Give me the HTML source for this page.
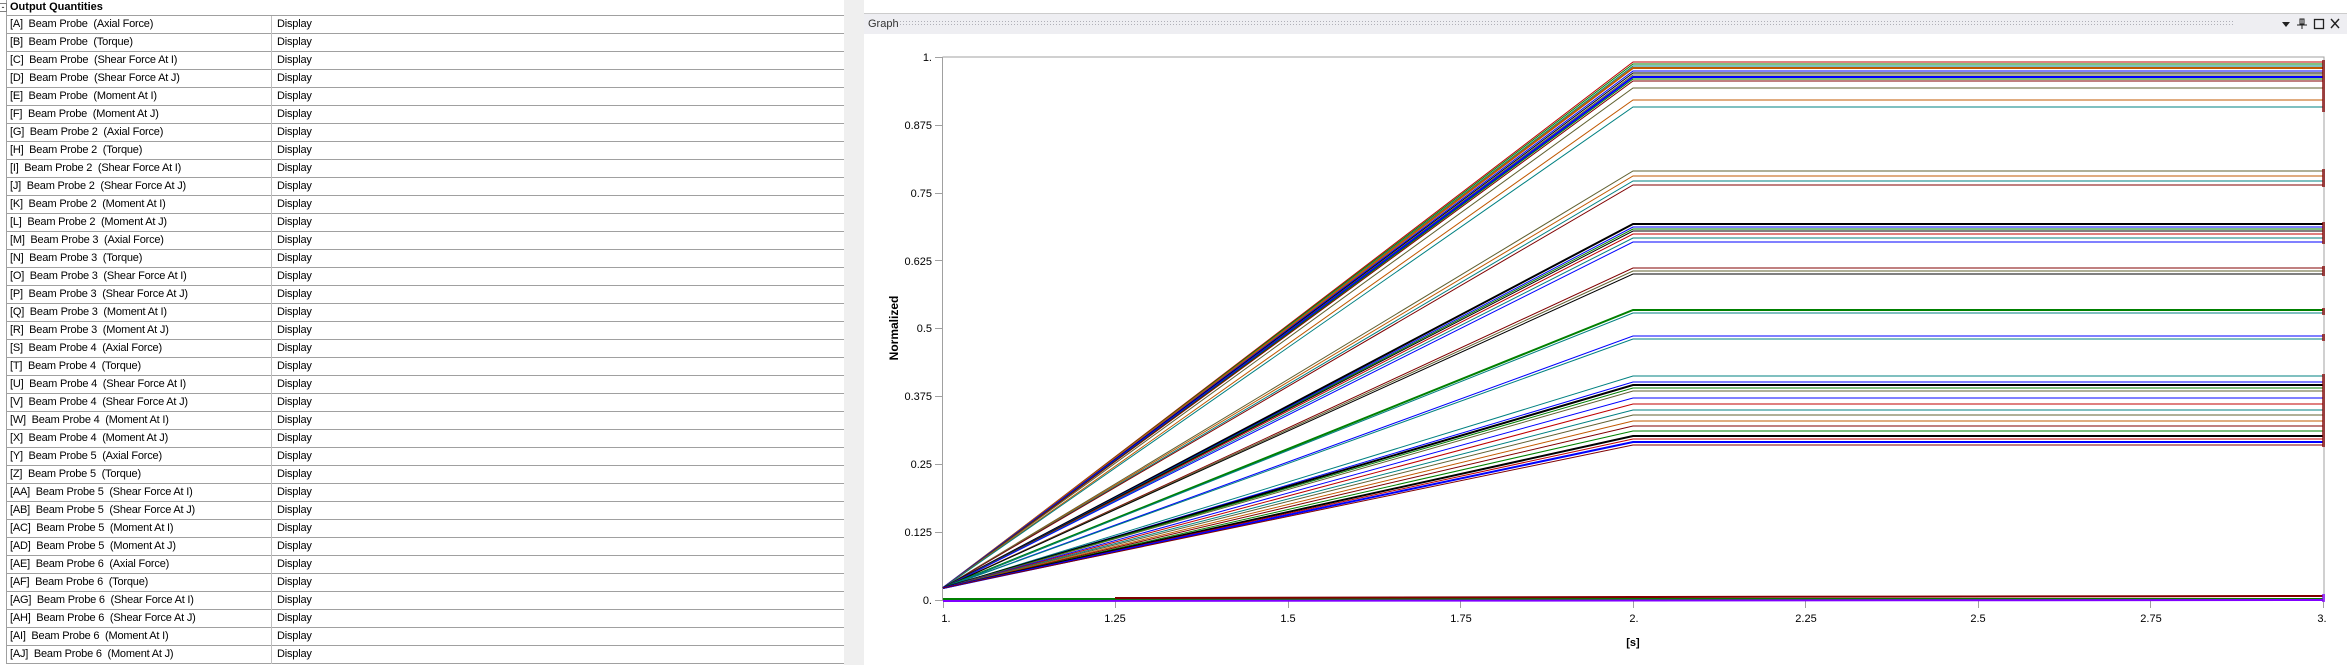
<!DOCTYPE html>
<html><head><meta charset="utf-8"><style>
body{margin:0;width:2347px;height:665px;background:#fff;position:relative;overflow:hidden;font-family:"Liberation Sans",sans-serif;font-size:11px;color:#000}
#tbl{position:absolute;left:6px;top:0;width:837px;border-left:1px solid #a0a0a0;border-right:1px solid #a0a0a0}
.r{height:17px;border-bottom:1px solid #a0a0a0;position:relative;line-height:17px;white-space:pre;letter-spacing:-0.2px}
.r span{position:absolute;left:3px}
.r b{position:absolute;left:264px;top:0;bottom:-1px;border-left:1px solid #c0c0c0;font-weight:normal;padding-left:5px}
.h{height:15px;border-bottom:1px solid #a0a0a0;font-weight:bold;line-height:15px;padding-left:3px}
#minus{position:absolute;left:0;top:3px;width:6px;height:7px;border:1px solid #808080;border-left:none;font-size:9px;line-height:6px;text-align:center;background:#fff}
#gut{position:absolute;left:844px;top:0;width:20px;height:665px;background:#efefef}
#gh{position:absolute;left:864px;top:13px;width:1483px;height:20px;background:#eeeef2;border-top:1px solid #ccc}
</style></head><body>
<div id="tbl">
<div class="h">Output Quantities</div>
<div class="r"><span>[A]  Beam Probe  (Axial Force)</span><b>Display</b></div>
<div class="r"><span>[B]  Beam Probe  (Torque)</span><b>Display</b></div>
<div class="r"><span>[C]  Beam Probe  (Shear Force At I)</span><b>Display</b></div>
<div class="r"><span>[D]  Beam Probe  (Shear Force At J)</span><b>Display</b></div>
<div class="r"><span>[E]  Beam Probe  (Moment At I)</span><b>Display</b></div>
<div class="r"><span>[F]  Beam Probe  (Moment At J)</span><b>Display</b></div>
<div class="r"><span>[G]  Beam Probe 2  (Axial Force)</span><b>Display</b></div>
<div class="r"><span>[H]  Beam Probe 2  (Torque)</span><b>Display</b></div>
<div class="r"><span>[I]  Beam Probe 2  (Shear Force At I)</span><b>Display</b></div>
<div class="r"><span>[J]  Beam Probe 2  (Shear Force At J)</span><b>Display</b></div>
<div class="r"><span>[K]  Beam Probe 2  (Moment At I)</span><b>Display</b></div>
<div class="r"><span>[L]  Beam Probe 2  (Moment At J)</span><b>Display</b></div>
<div class="r"><span>[M]  Beam Probe 3  (Axial Force)</span><b>Display</b></div>
<div class="r"><span>[N]  Beam Probe 3  (Torque)</span><b>Display</b></div>
<div class="r"><span>[O]  Beam Probe 3  (Shear Force At I)</span><b>Display</b></div>
<div class="r"><span>[P]  Beam Probe 3  (Shear Force At J)</span><b>Display</b></div>
<div class="r"><span>[Q]  Beam Probe 3  (Moment At I)</span><b>Display</b></div>
<div class="r"><span>[R]  Beam Probe 3  (Moment At J)</span><b>Display</b></div>
<div class="r"><span>[S]  Beam Probe 4  (Axial Force)</span><b>Display</b></div>
<div class="r"><span>[T]  Beam Probe 4  (Torque)</span><b>Display</b></div>
<div class="r"><span>[U]  Beam Probe 4  (Shear Force At I)</span><b>Display</b></div>
<div class="r"><span>[V]  Beam Probe 4  (Shear Force At J)</span><b>Display</b></div>
<div class="r"><span>[W]  Beam Probe 4  (Moment At I)</span><b>Display</b></div>
<div class="r"><span>[X]  Beam Probe 4  (Moment At J)</span><b>Display</b></div>
<div class="r"><span>[Y]  Beam Probe 5  (Axial Force)</span><b>Display</b></div>
<div class="r"><span>[Z]  Beam Probe 5  (Torque)</span><b>Display</b></div>
<div class="r"><span>[AA]  Beam Probe 5  (Shear Force At I)</span><b>Display</b></div>
<div class="r"><span>[AB]  Beam Probe 5  (Shear Force At J)</span><b>Display</b></div>
<div class="r"><span>[AC]  Beam Probe 5  (Moment At I)</span><b>Display</b></div>
<div class="r"><span>[AD]  Beam Probe 5  (Moment At J)</span><b>Display</b></div>
<div class="r"><span>[AE]  Beam Probe 6  (Axial Force)</span><b>Display</b></div>
<div class="r"><span>[AF]  Beam Probe 6  (Torque)</span><b>Display</b></div>
<div class="r"><span>[AG]  Beam Probe 6  (Shear Force At I)</span><b>Display</b></div>
<div class="r"><span>[AH]  Beam Probe 6  (Shear Force At J)</span><b>Display</b></div>
<div class="r"><span>[AI]  Beam Probe 6  (Moment At I)</span><b>Display</b></div>
<div class="r"><span>[AJ]  Beam Probe 6  (Moment At J)</span><b>Display</b></div>
</div>
<div id="minus">-</div>
<div id="gut"></div>
<div id="gh"></div>
<svg style="position:absolute;left:0;top:0" width="2347" height="665">
<defs><pattern id="dot" width="3" height="3" patternUnits="userSpaceOnUse"><rect width="1" height="1" fill="#b0b0b8"/></pattern></defs>
<text x="868" y="27" font-family="Liberation Sans" font-size="11" fill="#333">Graph</text>
<rect x="900" y="20" width="1335" height="6" fill="url(#dot)"/>
<path d="M2282 22h8l-4 5z" fill="#222"/>
<path d="M2302 19v6M2300 19h4v5h-4zM2297 25h10M2302 25v4" stroke="#222" fill="none"/>
<rect x="2314.5" y="19.5" width="9" height="9" fill="none" stroke="#222" stroke-width="1.3"/>
<path d="M2331 19l8 9M2339 19l-8 9" stroke="#222" stroke-width="1.4"/>
<g font-family="Liberation Sans" font-size="11" fill="#000" text-anchor="end">
<text x="932" y="61">1.</text><text x="932" y="129">0.875</text><text x="932" y="197">0.75</text><text x="932" y="265">0.625</text><text x="932" y="332">0.5</text><text x="932" y="400">0.375</text><text x="932" y="468">0.25</text><text x="932" y="536">0.125</text><text x="932" y="604">0.</text>
</g>
<g font-family="Liberation Sans" font-size="11" text-anchor="middle">
<text x="946" y="622">1.</text><text x="1115" y="622">1.25</text><text x="1288" y="622">1.5</text><text x="1461" y="622">1.75</text><text x="1634" y="622">2.</text><text x="1806" y="622">2.25</text><text x="1978" y="622">2.5</text><text x="2151" y="622">2.75</text><text x="2322" y="622">3.</text>
<text x="1633" y="646" font-weight="bold">[s]</text>
</g>
<text transform="translate(898,328) rotate(-90)" font-family="Liberation Sans" font-size="12" font-weight="bold" text-anchor="middle">Normalized</text>
<g stroke="#a0a0a0" fill="none">
<path d="M942.5 57v543.5h1381.5V57H942.5"/>
<path d="M935 57.5h7M935 125.5h7M935 193.5h7M935 260.5h7M935 328.5h7M935 396.5h7M935 464.5h7M935 532.5h7M935 600.5h7"/>
<path d="M943.5 601v7M1115.5 601v7M1288.5 601v7M1460.5 601v7M1633.5 601v7M1805.5 601v7M1978.5 601v7M2150.5 601v7M2323.5 601v7"/>
</g>
<g fill="none" stroke-width="1">
<path stroke="#c00000" d="M943 588L1633 62L2323 62"/>
<path stroke="#008000" d="M943 588L1633 64L2323 64"/>
<path stroke="#008080" d="M943 588L1633 66L2323 66"/>
<path stroke="#c05800" d="M943 588L1633 68L2323 68" stroke-width="2"/>
<path stroke="#0000ff" d="M943 588L1633 71L2323 71"/>
<path stroke="#000" d="M943 588L1633 73L2323 73"/>
<path stroke="#606030" d="M943 588L1633 75L2323 75"/>
<path stroke="#0000ff" d="M943 588L1633 77L2323 77" stroke-width="2"/>
<path stroke="#008000" d="M943 588L1633 79L2323 79"/>
<path stroke="#800000" d="M943 588L1633 81L2323 81"/>
<path stroke="#606030" d="M943 588L1633 88L2323 88"/>
<path stroke="#c05800" d="M943 588L1633 100L2323 100"/>
<path stroke="#008080" d="M943 588L1633 107L2323 107"/>
<path stroke="#606030" d="M943 588L1633 171L2323 171"/>
<path stroke="#c05800" d="M943 588L1633 176L2323 176"/>
<path stroke="#008080" d="M943 588L1633 181L2323 181"/>
<path stroke="#800000" d="M943 588L1633 185L2323 185"/>
<path stroke="#000" d="M943 588L1633 224L2323 224" stroke-width="2"/>
<path stroke="#0000ff" d="M943 588L1633 227L2323 227"/>
<path stroke="#008000" d="M943 588L1633 229L2323 229"/>
<path stroke="#000" d="M943 588L1633 231L2323 231"/>
<path stroke="#c00000" d="M943 588L1633 234L2323 234"/>
<path stroke="#008080" d="M943 588L1633 238L2323 238"/>
<path stroke="#0000ff" d="M943 588L1633 242L2323 242"/>
<path stroke="#800000" d="M943 588L1633 268L2323 268"/>
<path stroke="#606030" d="M943 588L1633 271L2323 271"/>
<path stroke="#000" d="M943 588L1633 274L2323 274"/>
<path stroke="#008000" d="M943 588L1633 310L2323 310" stroke-width="2"/>
<path stroke="#008080" d="M943 588L1633 313L2323 313"/>
<path stroke="#0000ff" d="M943 588L1633 336L2323 336"/>
<path stroke="#008080" d="M943 588L1633 339L2323 339"/>
<path stroke="#008080" d="M943 588L1633 376L2323 376"/>
<path stroke="#0000ff" d="M943 588L1633 382L2323 382"/>
<path stroke="#000" d="M943 588L1633 385L2323 385" stroke-width="2"/>
<path stroke="#008000" d="M943 588L1633 388L2323 388"/>
<path stroke="#606030" d="M943 588L1633 391L2323 391"/>
<path stroke="#0000ff" d="M943 588L1633 398L2323 398"/>
<path stroke="#c00000" d="M943 588L1633 404L2323 404"/>
<path stroke="#008080" d="M943 588L1633 410L2323 410"/>
<path stroke="#606030" d="M943 588L1633 415L2323 415"/>
<path stroke="#c05800" d="M943 588L1633 421L2323 421"/>
<path stroke="#800000" d="M943 588L1633 426L2323 426"/>
<path stroke="#008000" d="M943 588L1633 431L2323 431"/>
<path stroke="#000" d="M943 588L1633 436L2323 436" stroke-width="2"/>
<path stroke="#c00000" d="M943 588L1633 439L2323 439"/>
<path stroke="#0000ff" d="M943 588L1633 442L2323 442" stroke-width="2"/>
<path stroke="#800000" d="M943 588L1633 445L2323 445"/>
<path stroke="#008000" d="M943 599L2323 599" stroke-width="2"/>
<path stroke="#800000" d="M1115 598L1633 597L2323 596" stroke-width="2"/>
<path stroke="#8000ff" d="M943 601L2323 600" stroke-width="2"/>
</g>
<g fill="#800000" opacity="0.7">
<rect x="2322" y="60" width="3" height="52"/>
<rect x="2322" y="169" width="3" height="18"/>
<rect x="2322" y="222" width="3" height="22"/>
<rect x="2322" y="266" width="3" height="10"/>
<rect x="2322" y="308" width="3" height="7"/>
<rect x="2322" y="334" width="3" height="7"/>
<rect x="2322" y="374" width="3" height="73"/>
<rect x="2322" y="594" width="3" height="8" fill="#8000ff"/>
</g>
</svg>
</body></html>
